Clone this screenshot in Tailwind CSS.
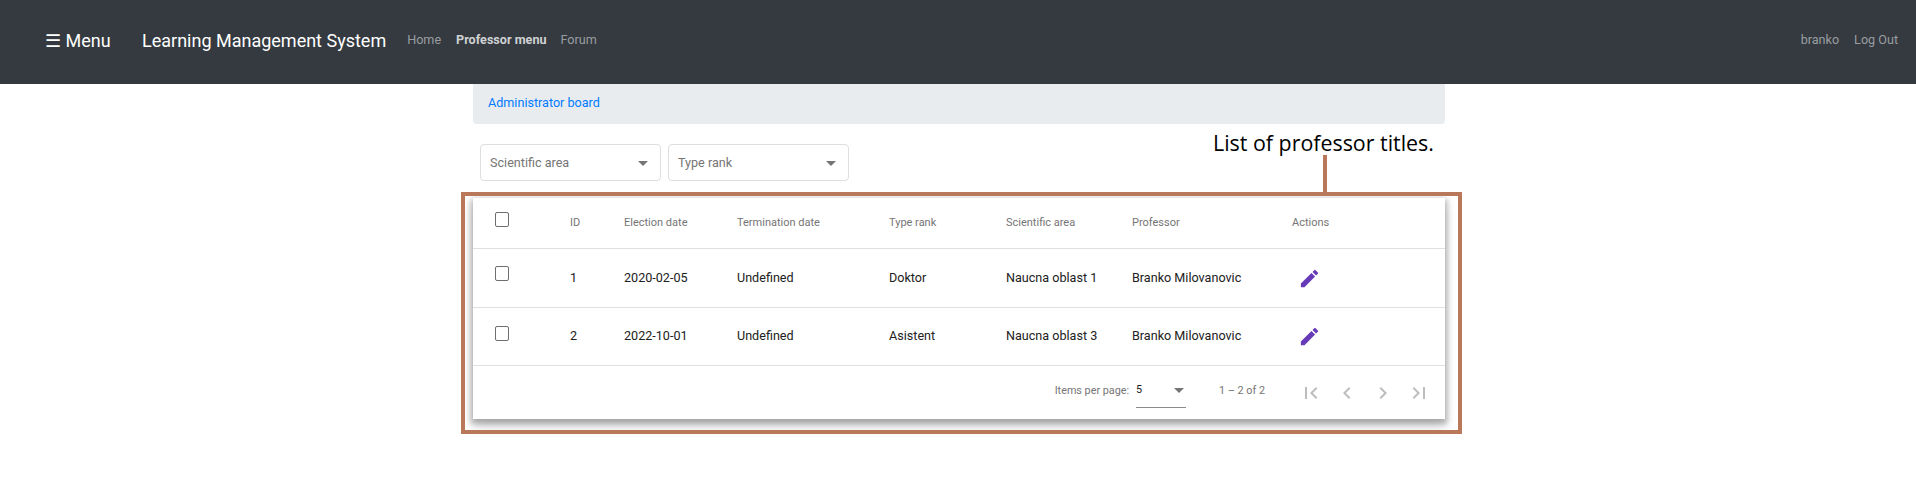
<!DOCTYPE html>
<html lang="en">
<head>
    <meta charset="UTF-8">
    <title>Learning Management System</title>
    <script src="https://cdn.jsdelivr.net/npm/@tailwindcss/browser@4"></script>
</head>
<body class="bg-white font-['Roboto',sans-serif] h-[491px] overflow-hidden relative">

    <!-- Navbar -->
    <nav class="h-[84px] bg-[#343a40] flex items-center pl-[45px] pr-[18px] pb-[3px]">
        <span class="text-white text-[18px] w-[97px]">☰ Menu</span>
        <span class="text-white text-[18px] mr-[21px]">Learning Management System</span>
        <a href="#" class="text-[#9a9da0] text-[12.6px] mr-[15px]">Home</a>
        <a href="#" class="text-[#d0d1d3] text-[12.6px] font-bold mr-[14px]">Professor menu</a>
        <a href="#" class="text-[#9a9da0] text-[12.6px]">Forum</a>
        <a href="#" class="text-[#9a9da0] text-[12.6px] ml-auto mr-[15px]">branko</a>
        <a href="#" class="text-[#9a9da0] text-[12.6px]">Log Out</a>
    </nav>

    <main class="w-[972px] ml-[473px]">
        <!-- Breadcrumb -->
        <div class="h-[40px] bg-[#e9ecef] rounded-b-[4px] flex items-center pl-[15px] pb-[1px] text-[12.6px] text-[#007bff]">Administrator board</div>

        <!-- Filters -->
        <div class="flex gap-[7px] ml-[7px] mt-[20px]">
            <div class="w-[181px] h-[37px] border border-[#dedede] rounded-[4px] flex items-center justify-between pl-[9px] pr-[12px] pt-[1px] text-[12.6px] text-[#757575]">
                Scientific area
                <span class="w-0 h-0 border-x-[5px] border-x-transparent border-t-[5px] border-t-[#757575]"></span>
            </div>
            <div class="w-[181px] h-[37px] border border-[#dedede] rounded-[4px] flex items-center justify-between pl-[9px] pr-[12px] pt-[1px] text-[12.6px] text-[#757575]">
                Type rank
                <span class="w-0 h-0 border-x-[5px] border-x-transparent border-t-[5px] border-t-[#757575]"></span>
            </div>
        </div>

        <!-- Table card -->
        <div class="mt-[17px] bg-white h-[221px] shadow-[0_3px_6px_2px_rgba(0,0,0,0.28),0_8px_12px_rgba(0,0,0,0.12)]">
            <div class="h-[51px] border-b border-[#e0e0e0] pl-[22px] grid grid-cols-[75px_54px_113px_152px_117px_126px_160px_1fr] items-center text-[11px] text-[#757575]">
                <span class="w-[14px] h-[15px] border-[1.5px] border-[#6e6e6e] rounded-[2px] -mt-[8px]"></span>
                <span>ID</span>
                <span>Election date</span>
                <span>Termination date</span>
                <span>Type rank</span>
                <span>Scientific area</span>
                <span>Professor</span>
                <span>Actions</span>
            </div>
            <div class="h-[59px] border-b border-[#e0e0e0] pl-[22px] grid grid-cols-[75px_54px_113px_152px_117px_126px_160px_1fr] items-center text-[12.6px] text-[#212121]">
                <span class="w-[14px] h-[15px] border-[1.5px] border-[#6e6e6e] rounded-[2px] -mt-[9px]"></span>
                <span>1</span>
                <span>2020-02-05</span>
                <span>Undefined</span>
                <span>Doktor</span>
                <span>Naucna oblast 1</span>
                <span>Branko Milovanovic</span>
                <svg class="w-[23px] h-[23px] ml-[6px] fill-[#673ab7]" viewBox="0 0 24 24"><path d="M3 17.25V21h3.75L17.81 9.94l-3.75-3.75L3 17.25zM20.71 7.04a1 1 0 0 0 0-1.41l-2.34-2.34a1 1 0 0 0-1.41 0l-1.83 1.83 3.75 3.75 1.83-1.83z"/></svg>
            </div>
            <div class="h-[58px] border-b border-[#e0e0e0] pl-[22px] grid grid-cols-[75px_54px_113px_152px_117px_126px_160px_1fr] items-center text-[12.6px] text-[#212121]">
                <span class="w-[14px] h-[15px] border-[1.5px] border-[#6e6e6e] rounded-[2px] -mt-[6px]"></span>
                <span>2</span>
                <span>2022-10-01</span>
                <span>Undefined</span>
                <span>Asistent</span>
                <span>Naucna oblast 3</span>
                <span>Branko Milovanovic</span>
                <svg class="w-[23px] h-[23px] ml-[6px] -mt-[1px] fill-[#673ab7]" viewBox="0 0 24 24"><path d="M3 17.25V21h3.75L17.81 9.94l-3.75-3.75L3 17.25zM20.71 7.04a1 1 0 0 0 0-1.41l-2.34-2.34a1 1 0 0 0-1.41 0l-1.83 1.83 3.75 3.75 1.83-1.83z"/></svg>
            </div>

            <!-- Paginator -->
            <div class="h-[53px] flex items-center justify-end text-[10.8px] text-[#757575] pr-[14px]">
                <span class="mr-[7px] -mt-[3px]">Items per page:</span>
                <div class="w-[50px] h-[29px] mt-[2px] border-b border-[#8a8a8a] flex justify-between items-center pr-[2px] pb-[5px] mr-[33px]">
                    <span class="text-[#212121]">5</span>
                    <span class="w-0 h-0 border-x-[5px] border-x-transparent border-t-[5px] border-t-[#757575]"></span>
                </div>
                <span class="mr-[34px] -mt-[3px]">1 – 2 of 2</span>
                <div class="flex gap-[12px] fill-[#bdbdbd]">
                    <svg class="w-[24px] h-[24px]" viewBox="0 0 24 24"><path d="M18.41 16.59L13.82 12l4.59-4.59L17 6l-6 6 6 6zM6 6h2v12H6z"/></svg>
                    <svg class="w-[24px] h-[24px]" viewBox="0 0 24 24"><path d="M15.41 7.41L14 6l-6 6 6 6 1.41-1.41L10.83 12z"/></svg>
                    <svg class="w-[24px] h-[24px]" viewBox="0 0 24 24"><path d="M10 6L8.59 7.41 13.17 12l-4.58 4.59L10 18l6-6z"/></svg>
                    <svg class="w-[24px] h-[24px]" viewBox="0 0 24 24"><path d="M5.59 7.41L10.18 12l-4.59 4.59L7 18l6-6-6-6zM16 6h2v12h-2z"/></svg>
                </div>
            </div>
        </div>
    </main>

    <!-- Annotation drawn over the page -->
    <div class="absolute left-[461px] top-[192px] w-[1001px] h-[242px] border-[4px] border-[#b9785a]"></div>
    <div class="absolute left-[1323px] top-[155px] w-[4px] h-[38px] bg-[#b9785a]"></div>
    <div class="absolute left-[1213px] top-[128px] text-[21.4px] leading-[30px] text-black font-['Open_Sans',sans-serif]">List of professor titles.</div>

</body>
</html>
